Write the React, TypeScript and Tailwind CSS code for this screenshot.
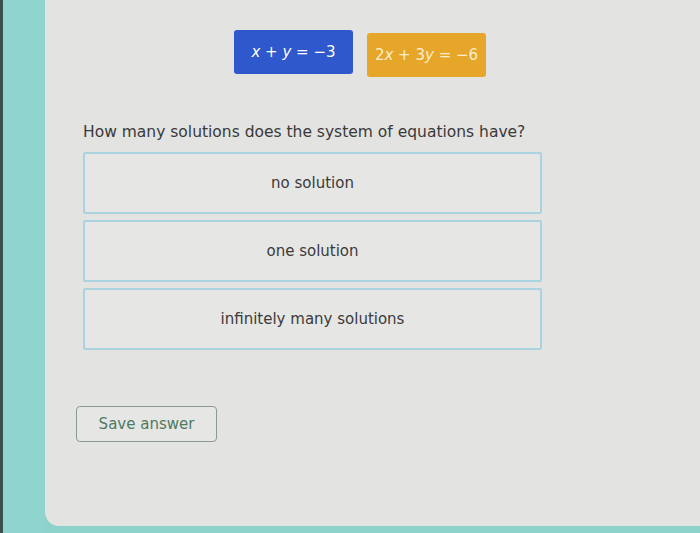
const options = ["no solution", "one solution", "infinitely many solutions"];

function EquationChip({ children, className }: { children: React.ReactNode; className: string }) {
  return (
    <div
      className={`flex h-[44px] w-[119px] items-center justify-center rounded-[3px] text-[15px] ${className}`}
    >
      {children}
    </div>
  );
}

export default function App() {
  return (
    <div
      className="flex h-[533px] w-[700px] overflow-hidden bg-[#8ed2cc]"
      style={{ fontFamily: '"DejaVu Sans", Verdana, sans-serif' }}
    >
      {/* dark bezel + teal sidebar */}
      <div className="w-[3px] bg-[#3d4f4c]" />
      <div className="w-[42px] bg-[#8fd4cf]" />

      <main className="mb-[7px] flex flex-1 flex-col rounded-bl-[14px] bg-[#e3e3e1] pl-[38px] pt-[30px]">
        <div className="flex gap-[14px] pl-[151px]">
          <EquationChip className="bg-[#2f58cc] text-white">
            <i>x</i>&nbsp;+&nbsp;<i>y</i>&nbsp;=&nbsp;−3
          </EquationChip>
          <EquationChip className="mt-[3px] bg-[#e6a62a] text-[#fbeecf]">
            2<i>x</i>&nbsp;+&nbsp;3<i>y</i>&nbsp;=&nbsp;−6
          </EquationChip>
        </div>

        <p className="mt-[44px] text-[15.5px] text-[#3a3a3a]">
          How many solutions does the system of equations have?
        </p>

        <div className="mt-[8px] flex flex-col gap-[6px]">
          {options.map((o) => (
            <button
              key={o}
              className="flex h-[62px] w-[459px] items-center justify-center rounded-[2px] border-2 border-[#a9d3df] bg-[#e6e6e4] text-[15px] text-[#3b3b3b]"
            >
              {o}
            </button>
          ))}
        </div>

        <button className="ml-[-7px] mt-[56px] h-[36px] w-[141px] rounded-[4px] border border-[#8d9a92] bg-[#e6e6e4] text-[15px] text-[#4f7a63]">
          Save answer
        </button>
      </main>
    </div>
  );
}
